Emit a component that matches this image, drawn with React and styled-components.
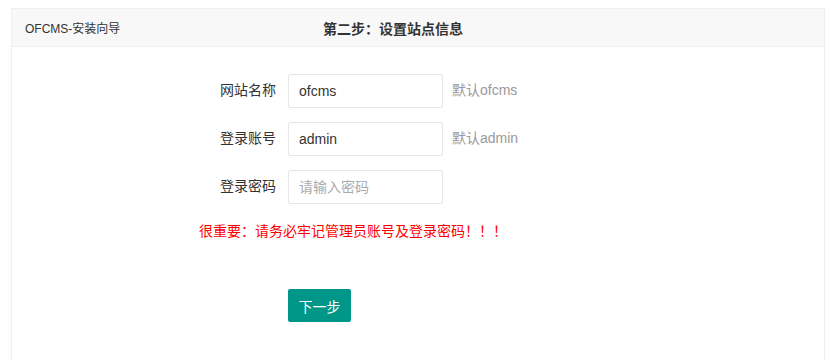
import React from 'react';
import styled, { createGlobalStyle } from 'styled-components';

const GlobalStyle = createGlobalStyle`
  html, body {
    margin: 0;
    padding: 0;
    background: #fff;
  }
  body {
    font-family: "Liberation Sans", "Noto Sans CJK SC", sans-serif;
    color: #333;
  }
`;

const Page = styled.div`
  padding: 8px 8px 0 11px;
  height: 360px;
  box-sizing: border-box;
  overflow: hidden;
`;

const Card = styled.div`
  border: 1px solid #efefef;
  border-bottom: none;
  height: 400px;
  background: #fff;
`;

const Header = styled.div`
  display: flex;
  align-items: center;
  height: 37px;
  background: #f8f8f8;
  border-bottom: 1px solid #eeeeee;
  padding-left: 13px;
`;

const Brand = styled.span`
  width: 298px;
  font-size: 12px;
  color: #333;
`;

const StepTitle = styled.span`
  font-size: 14px;
  font-weight: bold;
  color: #333;
`;

const Body = styled.div`
  padding-top: 27px;
`;

const Row = styled.div`
  display: flex;
  align-items: center;
  margin-bottom: 14px;
  line-height: 30px;
`;

const Label = styled.label`
  width: 264px;
  padding-right: 12px;
  text-align: right;
  font-size: 14px;
  color: #333;
  margin-top: -3px;
`;

const Input = styled.input`
  box-sizing: border-box;
  width: 155px;
  height: 34px;
  padding: 0 10px;
  border: 1px solid #e6e6e6;
  border-radius: 2px;
  font-family: inherit;
  font-size: 14px;
  color: #333;
  outline: none;

  &::placeholder {
    color: #aaa;
  }
`;

const Hint = styled.span`
  margin-left: 9px;
  margin-top: -3px;
  font-size: 14px;
  color: #999;
`;

const Warning = styled.p`
  margin: 17px 0 0 187px;
  line-height: 20px;
  font-size: 14px;
  color: #ff0000;
`;

const Actions = styled.div`
  padding: 48px 0 0 276px;
`;

const Button = styled.button`
  height: 33px;
  width: 63px;
  border: none;
  border-radius: 2px;
  background: #009688;
  color: #fff;
  font-family: inherit;
  font-size: 14px;
  cursor: pointer;
`;

const fields = [
  { label: '网站名称', value: 'ofcms', hint: '默认ofcms' },
  { label: '登录账号', value: 'admin', hint: '默认admin' },
  { label: '登录密码', placeholder: '请输入密码', type: 'password' },
];

const App = () => (
  <>
    <GlobalStyle />
    <Page>
      <Card>
        <Header>
          <Brand>OFCMS-安装向导</Brand>
          <StepTitle>第二步：设置站点信息</StepTitle>
        </Header>
        <Body>
          {fields.map((f) => (
            <Row key={f.label}>
              <Label>{f.label}</Label>
              <Input
                type={f.type || 'text'}
                defaultValue={f.value}
                placeholder={f.placeholder}
              />
              {f.hint && <Hint>{f.hint}</Hint>}
            </Row>
          ))}
          <Warning>很重要：请务必牢记管理员账号及登录密码！！！</Warning>
          <Actions>
            <Button type="button">下一步</Button>
          </Actions>
        </Body>
      </Card>
    </Page>
  </>
);

export default App;
